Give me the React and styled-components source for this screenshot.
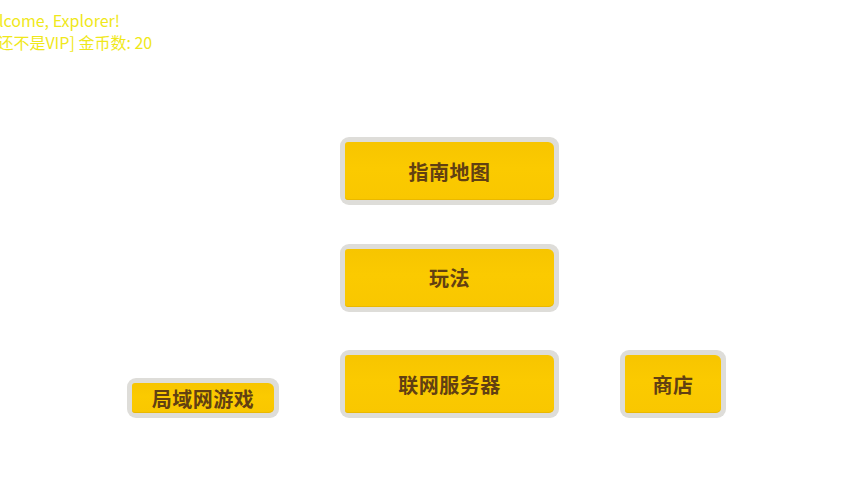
import styled, { createGlobalStyle } from "styled-components";

const Global = createGlobalStyle`
  html, body {
    margin: 0;
    padding: 0;
    background: #ffffff;
    overflow: hidden;
  }
  body {
    font-family: "Noto Sans CJK SC", "Noto Sans", sans-serif;
  }
`;

const Page = styled.div`
  width: 864px;
  height: 486px;
  position: relative;
  overflow: hidden;
`;

const Status = styled.div`
  margin-left: -24px;
  padding-top: 9px;
  color: #f0e81a;
  font-size: 16px;
  line-height: 22px;
  font-family: "Noto Sans CJK SC", "Noto Sans", sans-serif;
`;

const Menu = styled.div`
  display: grid;
  grid-template-columns: 1fr 219px 1fr;
  column-gap: 61px;
  row-gap: 38.5px;
  align-items: end;
  padding-left: 35px;
  margin-top: 84px;
`;

const Slot = styled.div`
  display: flex;
  justify-content: ${(p) => p.$align || "center"};
  grid-column: ${(p) => p.$col || "auto"};
`;

const Frame = styled.button`
  box-sizing: border-box;
  width: ${(p) => p.$w}px;
  height: ${(p) => p.$h || 68}px;
  padding: 5px;
  border: none;
  border-radius: 9px;
  background: #deddd9;
  cursor: pointer;
  display: flex;
`;

const Face = styled.span`
  flex: 1;
  display: flex;
  align-items: center;
  justify-content: center;
  border-radius: 3px 6px 5px 3px;
  background: linear-gradient(180deg, #f7c500 0%, #fbca00 45%, #f9c700 100%);
  box-shadow: inset 0 -1px 0 rgba(220, 170, 0, 0.5);
  color: #624012;
  font-family: "Noto Sans CJK SC", "Noto Sans", sans-serif;
  font-weight: 700;
  font-size: 20px;
  letter-spacing: 0.5px;
`;

const MenuButton = ({ label, w, h }) => (
  <Frame $w={w} $h={h}>
    <Face>{label}</Face>
  </Frame>
);

export default function App() {
  return (
    <Page>
      <Global />
      <Status>
        <div>Welcome, Explorer!</div>
        <div>[你还不是VIP] 金币数: 20</div>
      </Status>
      <Menu>
        <Slot $col="2">
          <MenuButton label="指南地图" w={219} />
        </Slot>
        <Slot $col="2">
          <MenuButton label="玩法" w={219} />
        </Slot>
        <Slot $col="1" $align="flex-end">
          <MenuButton label="局域网游戏" w={152} h={40} />
        </Slot>
        <Slot $col="2">
          <MenuButton label="联网服务器" w={219} />
        </Slot>
        <Slot $col="3" $align="flex-start">
          <MenuButton label="商店" w={106} />
        </Slot>
      </Menu>
    </Page>
  );
}
